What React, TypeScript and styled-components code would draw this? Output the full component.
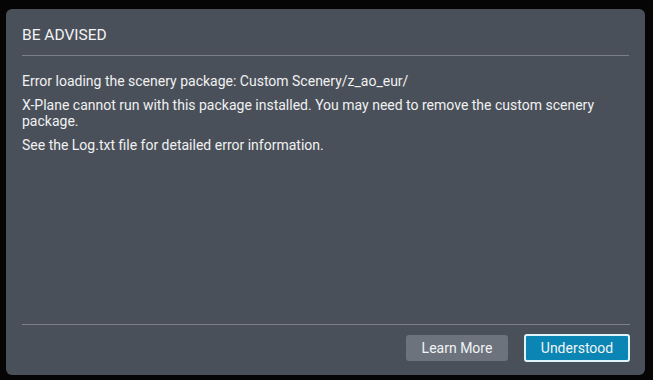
import React from "react";
import styled, { createGlobalStyle } from "styled-components";

const Global = createGlobalStyle`
  html, body { margin: 0; padding: 0; background: #050505; }
  body { font-family: Roboto, "Liberation Sans", sans-serif; }
`;

const Screen = styled.div`
  width: 653px;
  height: 380px;
  box-sizing: border-box;
  padding: 9px 8px 5px 6px;
  background: #050505;
  display: flex;
`;

const Panel = styled.div`
  flex: 1;
  background: #4a5059;
  border-radius: 6px;
  padding: 0 16px;
  display: flex;
  flex-direction: column;
`;

const Header = styled.div`
  height: 47px;
  display: flex;
  align-items: flex-end;
  padding-bottom: 11px;
  box-sizing: border-box;
  border-bottom: 1px solid #7b8088;
  color: #f2f3f4;
  font-size: 15.5px;
`;

const Body = styled.div`
  flex: 1;
  padding-top: 17px;
  display: flex;
  flex-direction: column;
  gap: 8px;
  color: #f0f1f2;
  font-size: 14px;
  line-height: 16px;
`;

const Para = styled.p`
  margin: 0;
`;

const Footer = styled.div`
  border-top: 1px solid #7b8088;
  height: 51px;
  box-sizing: border-box;
  display: flex;
  justify-content: flex-end;
  align-items: center;
  gap: 16px;
  padding-bottom: 5px;
  margin-right: -1px;
`;

const Button = styled.button<{ $primary?: boolean }>`
  font-family: Roboto, "Liberation Sans", sans-serif;
  font-size: 14px;
  color: #f2f4f5;
  height: ${(p) => (p.$primary ? "28px" : "26px")};
  width: ${(p) => (p.$primary ? "106px" : "102px")};
  border-radius: 3px;
  border: ${(p) => (p.$primary ? "2px solid #dff3fb" : "none")};
  background: ${(p) => (p.$primary ? "#0b85b3" : "#6c737d")};
  padding: 0;
  display: flex;
  align-items: center;
  justify-content: center;
  box-sizing: border-box;
`;

export default function App() {
  return (
    <>
      <Global />
      <Screen>
        <Panel>
          <Header>BE ADVISED</Header>
          <Body>
            <Para>Error loading the scenery package: Custom Scenery/z_ao_eur/</Para>
            <Para>
              X-Plane cannot run with this package installed. You may need to remove the custom scenery
              package.
            </Para>
            <Para>See the Log.txt file for detailed error information.</Para>
          </Body>
          <Footer>
            <Button>Learn More</Button>
            <Button $primary>Understood</Button>
          </Footer>
        </Panel>
      </Screen>
    </>
  );
}
